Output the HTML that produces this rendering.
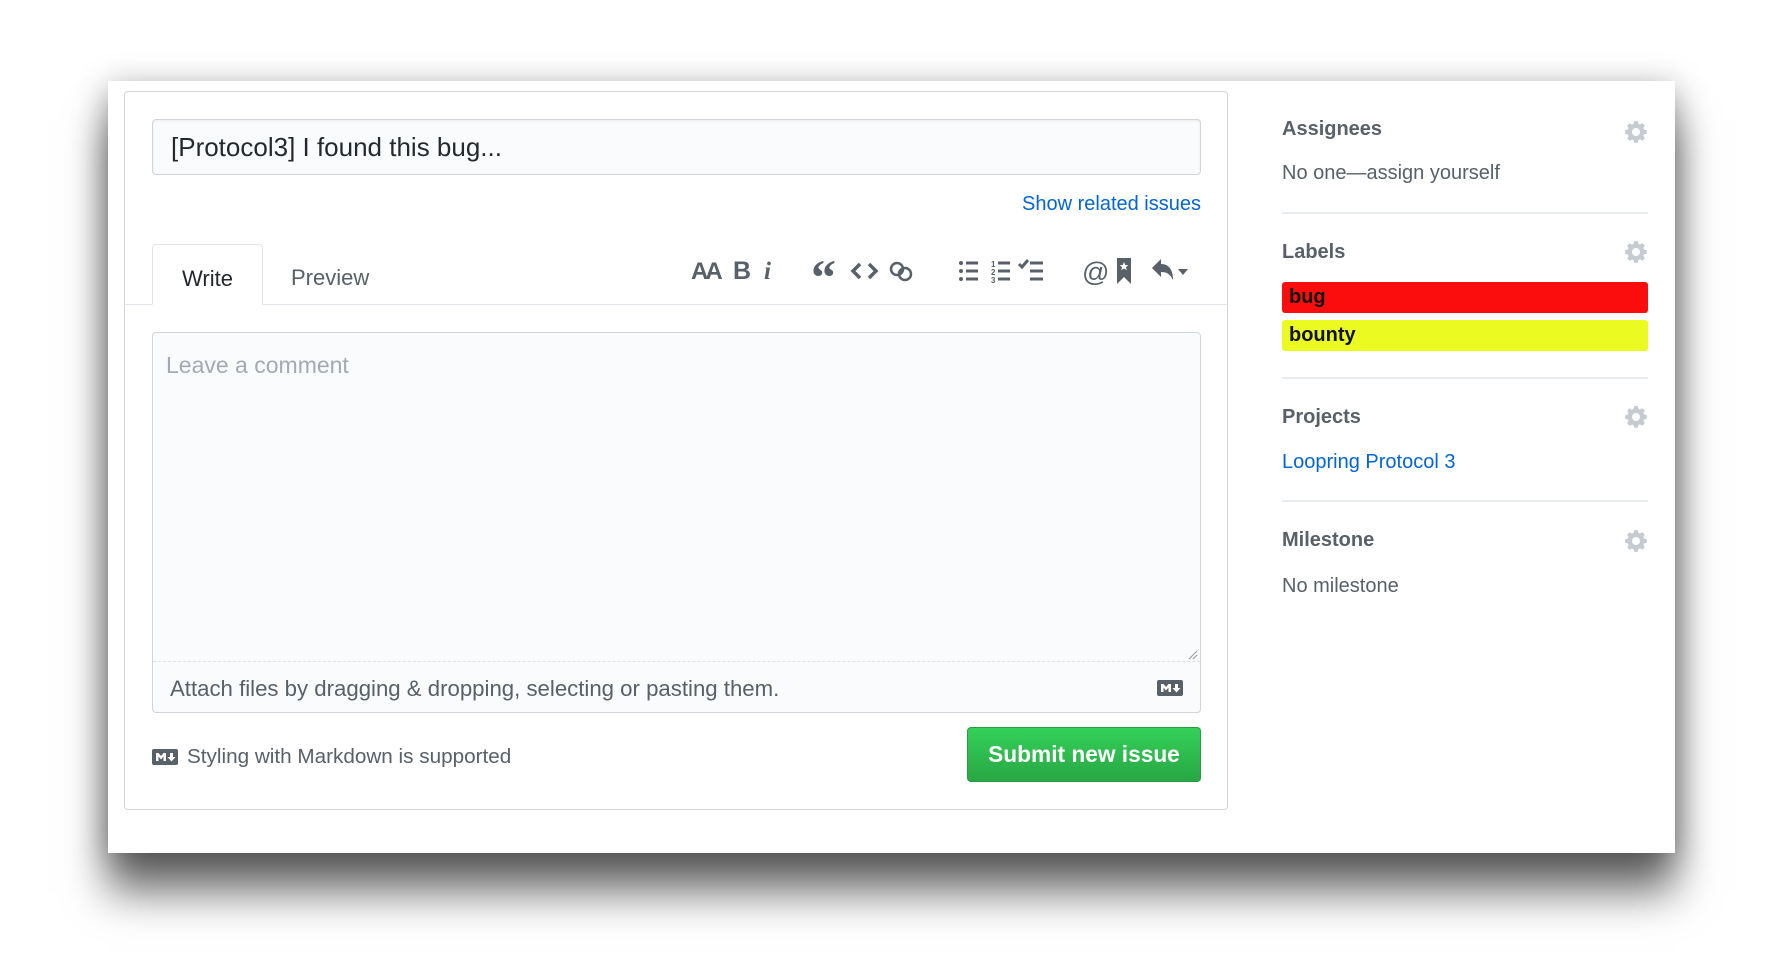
<!DOCTYPE html>
<html><head><meta charset="utf-8"><style>
*{box-sizing:border-box;margin:0;padding:0}
body{width:1788px;height:972px;background:#fff;position:relative;overflow:hidden;font-family:"Liberation Sans",Helvetica,Arial,sans-serif;color:#24292e}
.card{position:absolute;left:108px;top:81px;width:1567px;height:772px;background:#fff;box-shadow:0 40px 40px rgba(0,0,0,.55),0 6px 30px rgba(0,0,0,.35)}
.form{position:absolute;left:124px;top:91px;width:1104px;height:719px;border:1px solid #d1d5da;border-radius:4px;background:#fff}
.abs{position:absolute}
.title{left:152px;top:119px;width:1049px;height:56px;border:1px solid #d1d5da;border-radius:4px;background:#fafbfc;box-shadow:inset 0 1px 2px rgba(27,31,35,.075);font-size:26px;padding:12px 18px;color:#24292e}
.related{right:587px;top:193px;font-size:20px;color:#0366d6}
.tabline{left:124px;top:304px;width:1104px;height:1px;background:#e1e4e8}
.tab{top:244px;height:61px;font-size:22px;padding-top:21px}
.write{left:152px;width:111px;border:1px solid #e1e4e8;border-bottom:1px solid #fff;border-radius:4px 4px 0 0;background:#fff;text-align:center}
.preview{left:291px;color:#586069}
.ta{left:152px;top:332px;width:1049px;height:381px;border:1px solid #d1d5da;border-radius:4px;background:#fafbfc}
.dash{left:153px;top:661px;width:1047px;border-top:1px dashed #dfe2e5}
.ph{left:166px;top:352px;font-size:23px;color:#a3aab1}
.attach{left:170px;top:676px;font-size:22.2px;color:#586069}
.sty{left:187px;top:745px;font-size:20.7px;color:#586069}
.btn{left:967px;top:727px;width:234px;height:55px;border-radius:4px;background:linear-gradient(#34d058,#28a745);border:1px solid #2a9a44;color:#fff;font-weight:bold;font-size:22.7px;text-align:center;line-height:53px}
.side{left:1282px;width:366px}
.h{font-size:20px;font-weight:bold;color:#586069}
.t{font-size:20px;color:#586069}
.sep{left:1282px;width:366px;height:2px;background:#e9ecef}
.lab{left:1282px;width:366px;height:31px;border-radius:3px;font-size:20px;font-weight:bold;padding:4px 7px;color:#111}
.gear{left:1625px;width:22px;height:22px}
</style></head><body>
<div class="card"></div>
<div class="form"></div>
<div class="abs title">[Protocol3] I found this bug...</div>
<div class="abs related">Show related issues</div>
<div class="abs tabline"></div>
<div class="abs tab write">Write</div>
<div class="abs tab preview">Preview</div>
<svg class="abs" style="left:686px;top:254px" width="520" height="32" viewBox="0 0 520 32" fill="#586069">
<text x="5" y="25" font-family="Liberation Sans" font-weight="bold" font-size="24" letter-spacing="-3">AA</text>
<text x="47" y="25" font-family="Liberation Sans" font-weight="bold" font-size="25">B</text>
<text x="78" y="25" font-family="Liberation Serif" font-style="italic" font-weight="bold" font-size="25">i</text>
<text x="125" y="40" font-family="Liberation Serif" font-weight="bold" font-size="50">“</text>
<path d="M174 10 l-7 7 7 7 M183 10 l7 7 -7 7" stroke="#586069" stroke-width="3.5" fill="none"/>
<circle cx="211" cy="15" r="6" stroke="#586069" stroke-width="2.5" fill="none"/><circle cx="219" cy="20" r="6" stroke="#586069" stroke-width="2.5" fill="none"/>
<g><circle cx="275" cy="9" r="2"/><circle cx="275" cy="17" r="2"/><circle cx="275" cy="25" r="2"/><rect x="280" y="7.5" width="12" height="3"/><rect x="280" y="15.5" width="12" height="3"/><rect x="280" y="23.5" width="12" height="3"/></g>
<g><text x="305" y="13" font-size="8" font-weight="bold">1</text><text x="305" y="21" font-size="8" font-weight="bold">2</text><text x="305" y="29" font-size="8" font-weight="bold">3</text><rect x="312" y="7.5" width="12" height="3"/><rect x="312" y="15.5" width="12" height="3"/><rect x="312" y="23.5" width="12" height="3"/></g>
<path d="M333 10 l3 3 6-7" stroke="#586069" stroke-width="3" fill="none"/><rect x="344" y="7.5" width="13" height="3"/><rect x="344" y="15.5" width="13" height="3"/><rect x="344" y="23.5" width="13" height="3"/>
<text x="396" y="27" font-family="Liberation Sans" font-size="27">@</text>
<path d="M431 4 h14 v26 l-7-7 -7 7z"/><path d="M438 8 l1.3 3 3 .2 -2.4 2 1 3 -2.9-1.7 -2.9 1.7 1-3 -2.4-2 3-.2z" fill="#fff"/>
<path d="M466 14 l9-9 v5 c8 0 12 6 12 16 c-3-6-6-8-12-8 v5z"/>
<path d="M492 15 h10 l-5 6z"/>
</svg>
<div class="abs ta"></div>
<div class="abs dash"></div>
<div class="abs ph">Leave a comment</div>
<svg class="abs" style="left:1188px;top:650px" width="10" height="10"><path d="M9 1 L1 9 M9 5 L5 9" stroke="#999" stroke-width="1"/></svg>
<div class="abs attach">Attach files by dragging &amp; dropping, selecting or pasting them.</div>
<svg class="abs" style="left:1157px;top:680px" width="26" height="16" viewBox="0 0 26 16"><rect width="26" height="16" rx="2" fill="#586069"/><path d="M4 12V4h2.5l2.5 3 2.5-3H14v8h-2.5V7.5L9 10.5 6.5 7.5V12z M18 4h3v4h2.5l-4 4.5-4-4.5H18z" fill="#fff"/></svg>
<svg class="abs" style="left:152px;top:749px" width="26" height="16" viewBox="0 0 26 16"><rect width="26" height="16" rx="2" fill="#586069"/><path d="M4 12V4h2.5l2.5 3 2.5-3H14v8h-2.5V7.5L9 10.5 6.5 7.5V12z M18 4h3v4h2.5l-4 4.5-4-4.5H18z" fill="#fff"/></svg>
<div class="abs sty">Styling with Markdown is supported</div>
<div class="abs btn">Submit new issue</div>

<div class="abs side h" style="top:118px">Assignees</div>
<div class="abs side t" style="top:162px">No one—assign yourself</div>
<div class="abs sep" style="top:212px"></div>
<div class="abs side h" style="top:241px">Labels</div>
<div class="abs lab" style="top:282px;background:#fc0d0d">bug</div>
<div class="abs lab" style="top:320px;background:#ebfb22">bounty</div>
<div class="abs sep" style="top:377px"></div>
<div class="abs side h" style="top:406px">Projects</div>
<div class="abs side t" style="top:451px;color:#0366d6">Loopring Protocol 3</div>
<div class="abs sep" style="top:500px"></div>
<div class="abs side h" style="top:529px">Milestone</div>
<div class="abs side t" style="top:575px">No milestone</div>
<svg width="0" height="0" style="position:absolute"><defs><g id="g"><path fill="#c6cbd1" fill-rule="evenodd" d="M11 0l1.8.2.6 2.6 1.6.7 2.3-1.4 2.5 2.5-1.4 2.3.7 1.6 2.6.6.2 1.8-.2 1.8-2.6.6-.7 1.6 1.4 2.3-2.5 2.5-2.3-1.4-1.6.7-.6 2.6L11 22l-1.8-.2-.6-2.6-1.6-.7-2.3 1.4-2.5-2.5 1.4-2.3-.7-1.6-2.6-.6L0 11l.2-1.8 2.6-.6.7-1.6-1.4-2.3 2.5-2.5 2.3 1.4 1.6-.7.6-2.6zM11 7a4 4 0 100 8 4 4 0 000-8z"/></g></defs></svg>
<svg class="abs gear" style="top:121px" viewBox="0 0 22 22"><use href="#g"/></svg>
<svg class="abs gear" style="top:241px" viewBox="0 0 22 22"><use href="#g"/></svg>
<svg class="abs gear" style="top:406px" viewBox="0 0 22 22"><use href="#g"/></svg>
<svg class="abs gear" style="top:530px" viewBox="0 0 22 22"><use href="#g"/></svg>
</body></html>
